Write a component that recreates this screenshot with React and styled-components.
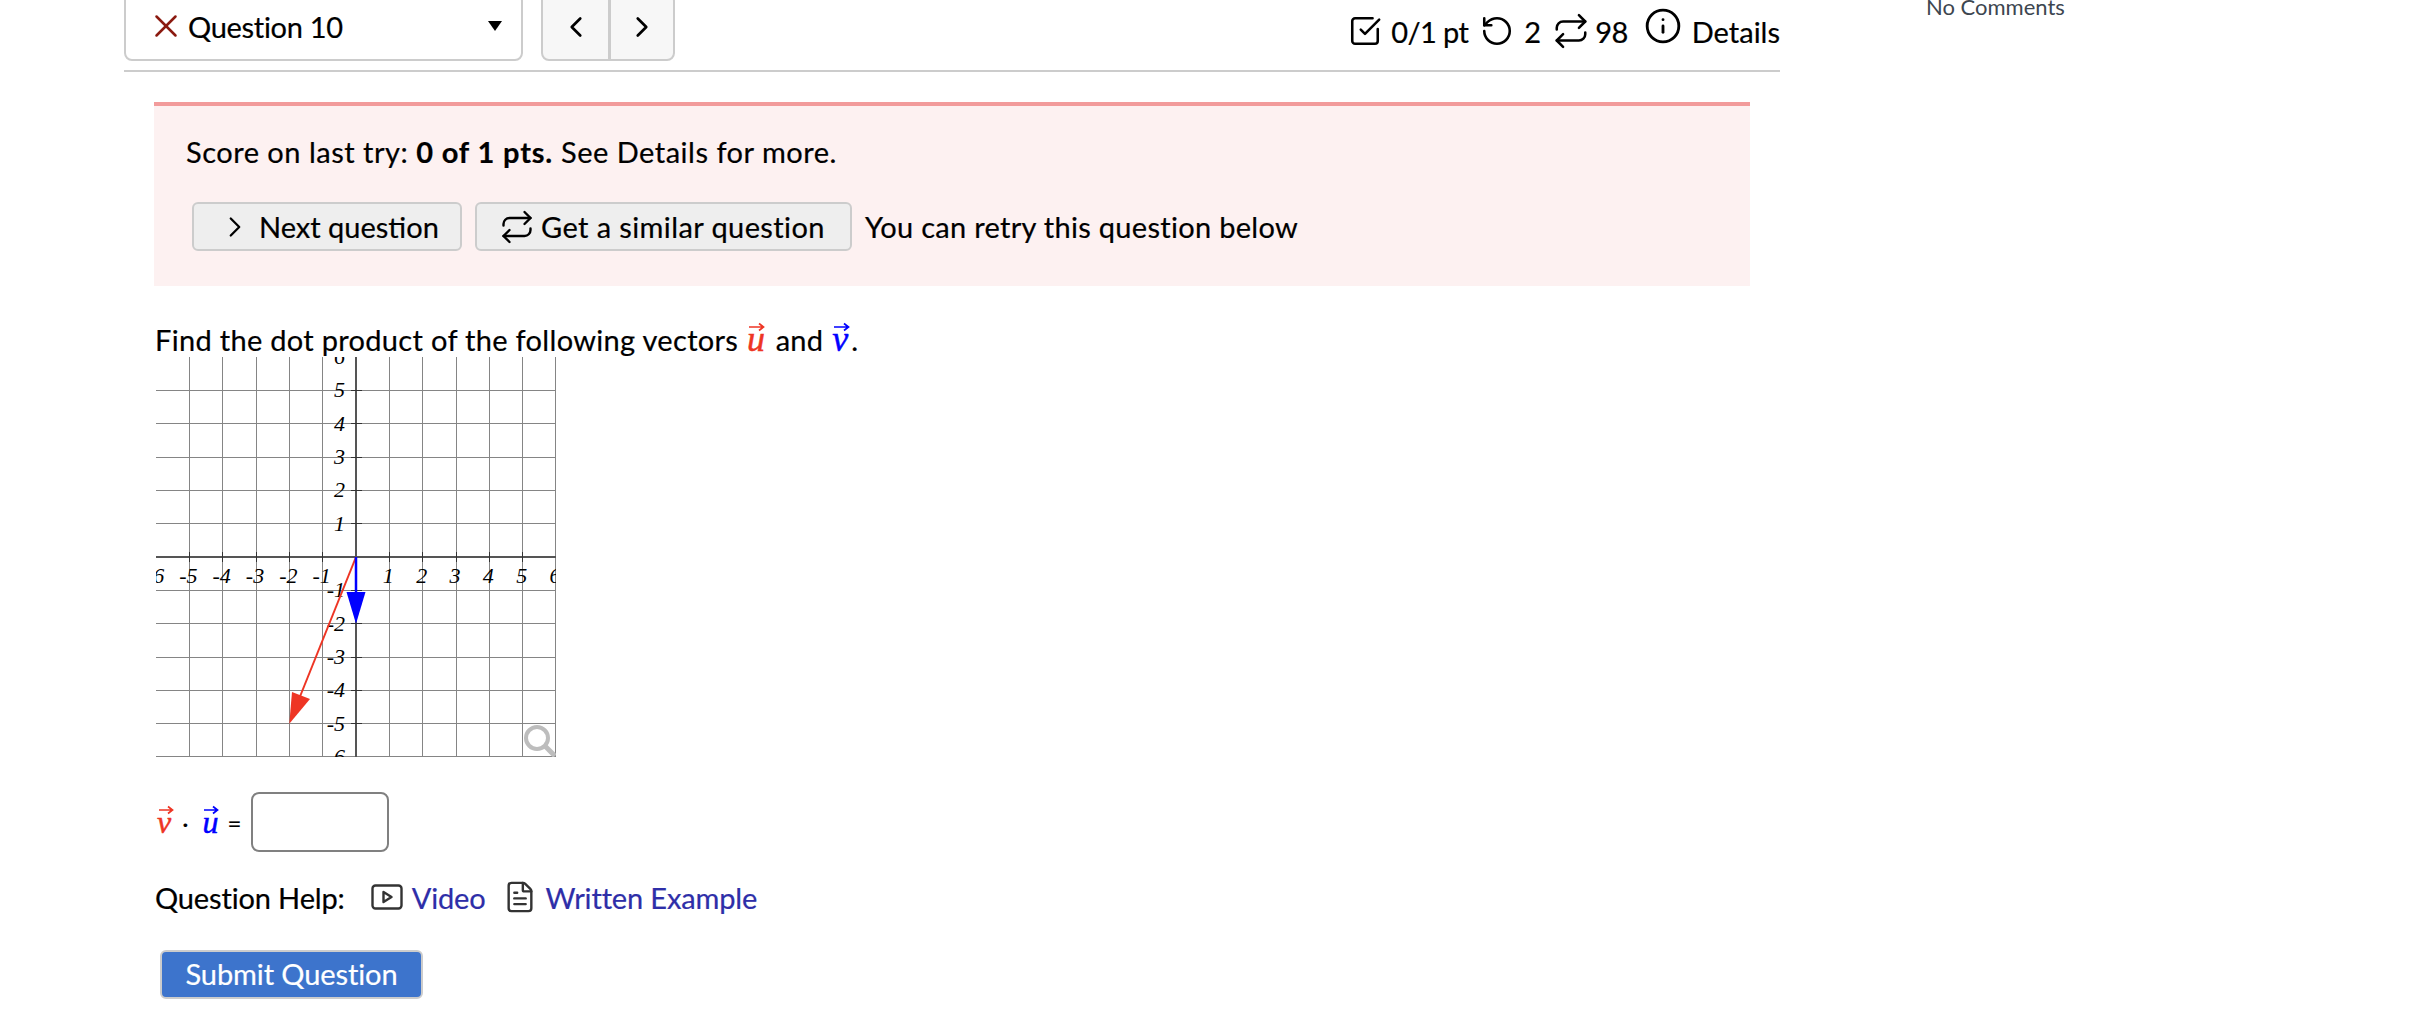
import React from "react";
import styled, { createGlobalStyle } from "styled-components";
import { X, ChevronLeft, ChevronRight, SquareCheckBig, RotateCcw, Repeat, Info, FileText } from "lucide-react";

const GlobalStyle = createGlobalStyle`
  html, body { margin: 0; padding: 0; background: #fff; overflow: hidden; height: 1027px; }
  body {
    font-family: Lato, "Liberation Sans", sans-serif;
    font-size: 29px;
    color: #000;
    -webkit-text-stroke: 0.2px currentColor;
  }
`;

const Page = styled.div`
  display: flex;
  align-items: flex-start;
  padding-left: 124px;
`;

const Main = styled.main`
  width: 1656px;
  margin-top: -7px;
`;

const Side = styled.aside`
  margin: -8px 0 0 146px;
  font-size: 22px;
  line-height: 30px;
  color: #3d4650;
  -webkit-text-stroke: 0;
`;

const Header = styled.header`
  display: flex;
  height: 79px;
  box-sizing: border-box;
  border-bottom: 2px solid #ccc;
`;

const Select = styled.div`
  width: 399px;
  height: 68px;
  box-sizing: border-box;
  display: flex;
  align-items: center;
  padding: 0 19px 2px 27px;
  gap: 9px;
  border: 2px solid #ccc;
  border-radius: 8px;
  letter-spacing: -0.3px;
  svg { margin: 0 -6px; }
`;

const Caret = styled.span`
  margin-left: auto;
  width: 0;
  height: 0;
  border-left: 7px solid transparent;
  border-right: 7px solid transparent;
  border-top: 10px solid #000;
`;

const NavGroup = styled.div`
  display: flex;
  height: 68px;
  margin-left: 18px;
  box-sizing: border-box;
  border: 2px solid #ccc;
  border-radius: 8px;
  background: #f7f7f7;
`;

const NavButton = styled.div`
  width: 65px;
  box-sizing: border-box;
  display: flex;
  align-items: center;
  justify-content: center;
  & + & { border-left: 3px solid #ccc; }
`;

const Stats = styled.div`
  margin-left: auto;
  height: 68px;
  display: flex;
  align-items: center;
  padding-top: 8px;
  box-sizing: border-box;
`;

const Stat = styled.span`
  display: inline-flex;
  align-items: center;
  gap: ${(p) => p.$gap}px;
  margin-left: ${(p) => p.$left || 0}px;
  letter-spacing: ${(p) => p.$track || 0}px;
  white-space: nowrap;
`;

const RaisedInfo = styled(Info)`
  margin-top: -11px;
`;

const Alert = styled.section`
  width: 1596px;
  height: 184px;
  box-sizing: border-box;
  margin: 30px 0 0 30px;
  padding: 27px 32px 0;
  background: #fdf1f1;
  border-top: 4px solid #f29b9b;
`;

const AlertLine = styled.div`
  line-height: 38px;
  letter-spacing: 0.5px;
  b { letter-spacing: 0.85px; }
`;

const Actions = styled.div`
  display: flex;
  align-items: center;
  margin: 31px 0 0 6px;
  gap: 13px;
`;

const Button = styled.div`
  display: flex;
  align-items: center;
  width: ${(p) => p.$w}px;
  height: 49px;
  box-sizing: border-box;
  padding-left: ${(p) => p.$pad}px;
  gap: ${(p) => p.$gap}px;
  background: #eee;
  border: 2px solid #ccc;
  border-radius: 6px;
  letter-spacing: ${(p) => p.$track || 0}px;
`;

const Note = styled.span`
  letter-spacing: 0.3px;
`;

const Question = styled.section`
  margin: 34px 0 0 31px;
`;

const Prompt = styled.p`
  position: relative;
  z-index: 1;
  margin: 0;
  line-height: 40px;
  white-space: nowrap;
  letter-spacing: 0.31px;
`;

const MathVar = styled.span`
  position: relative;
  display: inline-block;
  margin: 0 ${(p) => p.$after || 0}px 0 ${(p) => p.$before || 0}px;
  font-family: "Liberation Serif", serif;
  font-style: italic;
  font-size: ${(p) => p.$size}px;
  line-height: 1;
  color: ${(p) => p.$color};
  letter-spacing: 0;
  -webkit-text-stroke: 0.5px currentColor;
  svg {
    position: absolute;
    left: 2px;
    top: ${(p) => p.$top}px;
  }
`;

const GraphBox = styled.div`
  width: 400px;
  height: 400px;
  margin: -3px 0 0 1px;
  overflow: hidden;
  -webkit-text-stroke: 0;
`;

const AnswerRow = styled.div`
  display: flex;
  align-items: center;
  height: 60px;
  margin: 35px 0 0 2px;
  font-size: 24px;
`;

const Dot = styled.span`
  margin: 0 14px 0 11px;
`;

const Equals = styled.span`
  margin: 0 10px 0 9px;
`;

const AnswerInput = styled.div`
  width: 138px;
  height: 60px;
  box-sizing: border-box;
  border: 2px solid #808080;
  border-radius: 8px;
  background: #fff;
`;

const HelpRow = styled.div`
  display: flex;
  align-items: center;
  height: 40px;
  margin-top: 25px;
  white-space: nowrap;
  letter-spacing: -0.15px;
`;

const HelpLink = styled.a`
  display: inline-flex;
  align-items: center;
  gap: ${(p) => p.$gap}px;
  margin-left: ${(p) => p.$left}px;
  color: #2e2ea8;
`;

const Submit = styled.div`
  display: flex;
  align-items: center;
  justify-content: center;
  width: 263px;
  height: 49px;
  box-sizing: border-box;
  margin: 33px 0 0 5px;
  padding-bottom: 2px;
  color: #fff;
  background: #3d74cc;
  border: 2px solid #ccc;
  border-radius: 6px;
  letter-spacing: -0.1px;
`;

const VecArrow = ({ color, w }) => (
  <svg width={w} height="10" viewBox={`0 0 ${w} 10`}>
    <path d={`M0 5h${w - 2}M${w - 6} 1.500l4.500 3.500-4.500 3.500`} fill="none" stroke={color} strokeWidth="1.7" />
  </svg>
);

const VideoIcon = () => (
  <svg width="32" height="26" viewBox="0 0 32 26" fill="none" stroke="#333" strokeWidth="2.4">
    <rect x="1.5" y="1.500" width="29" height="23" rx="3" />
    <path d="M12.5 8l8 5-8 5z" strokeLinejoin="round" />
  </svg>
);

const U = 400 / 12;
const units = [-6, -5, -4, -3, -2, -1, 1, 2, 3, 4, 5, 6];
const gridLines = [1, 2, 3, 4, 5, 6, 7, 8, 9, 10, 11, 12].map((i) => Math.min(i * U, 399.5));

const Graph = () => (
  <svg width="400" height="400" viewBox="0 0 400 400">
    <g shapeRendering="crispEdges">
      {gridLines.map((pos) => (
        <g key={pos} stroke="#858585" strokeWidth="1">
          <line x1={pos} y1="0" x2={pos} y2="400" />
          <line x1="0" y1={pos} x2="400" y2={pos} />
        </g>
      ))}
      <line x1="200" y1="0" x2="200" y2="400" stroke="#555" strokeWidth="2" />
      <line x1="0" y1="200" x2="400" y2="200" stroke="#555" strokeWidth="2" />
      {units.filter((n) => Math.abs(n) < 6).map((n) => (
        <g key={n} stroke="#333">
          <line x1={200 + n * U} y1="195" x2={200 + n * U} y2="205" />
          <line x1="195" y1={200 - n * U} x2="206" y2={200 - n * U} />
        </g>
      ))}
    </g>
    {units.map((n) => (
      <g key={n} fontFamily="Liberation Serif" fontStyle="italic" fontSize="22" fill="#000">
        <text x={200 + n * U - 1} y="226" textAnchor="middle">{n}</text>
        <text x="189" y={200 - n * U + 7} textAnchor="end">{n}</text>
      </g>
    ))}
    <line x1="200" y1="200" x2="141" y2="347" stroke="#ee3524" strokeWidth="2" />
    <path d="M133.3 366.7 L136 335 L154 342 Z" fill="#ee3524" />
    <line x1="200" y1="200" x2="200" y2="240" stroke="#0000ff" strokeWidth="2.500" />
    <path d="M200 266.7 L190.500 235 L209.500 235 Z" fill="#0000ff" />
    <g fill="none" stroke="#bdbdbd" strokeWidth="4">
      <circle cx="381" cy="381" r="11" />
      <line x1="389" y1="389" x2="399" y2="399" strokeWidth="5" />
    </g>
  </svg>
);

export default function App() {
  return (
    <>
      <GlobalStyle />
      <Page>
        <Main>
          <Header>
            <Select>
              <X size={38} color="#8b1a10" strokeWidth={1.6} />
              <span>Question 10</span>
              <Caret />
            </Select>
            <NavGroup>
              <NavButton><ChevronLeft size={34} strokeWidth={1.9} /></NavButton>
              <NavButton><ChevronRight size={34} strokeWidth={1.9} /></NavButton>
            </NavGroup>
            <Stats>
              <Stat $gap={9} $track={-0.6}><SquareCheckBig size={34} strokeWidth={1.8} /> 0/1 pt</Stat>
              <Stat $left={12} $gap={10}><RotateCcw size={34} strokeWidth={1.8} /> 2</Stat>
              <Stat $left={11} $gap={5} $track={-0.5}><Repeat size={38} strokeWidth={1.6} /> 98</Stat>
              <Stat $left={16} $gap={10}><RaisedInfo size={38} strokeWidth={1.8} /> Details</Stat>
            </Stats>
          </Header>

          <Alert>
            <AlertLine>Score on last try: <b>0 of 1 pts.</b> See Details for more.</AlertLine>
            <Actions>
              <Button $w={270} $pad={24} $gap={7}>
                <ChevronRight size={34} strokeWidth={1.6} /> Next question
              </Button>
              <Button $w={377} $pad={22} $gap={6} $track={0.4}>
                <Repeat size={36} strokeWidth={1.6} /> Get a similar question
              </Button>
              <Note>You can retry this question below</Note>
            </Actions>
          </Alert>

          <Question>
            <Prompt>
              Find the dot product of the following vectors{" "}
              <MathVar $color="#ee3524" $size={36} $top={1} $before={1} $after={3}><VecArrow color="#ee3524" w={16} />u</MathVar> and{" "}
              <MathVar $color="#0000ff" $size={36} $top={1} $before={1} $after={3}><VecArrow color="#0000ff" w={16} />v</MathVar>.
            </Prompt>
            <GraphBox><Graph /></GraphBox>
            <AnswerRow>
              <MathVar $color="#ee3524" $size={32} $top={-1}><VecArrow color="#ee3524" w={15} />v</MathVar>
              <Dot>·</Dot>
              <MathVar $color="#0000ff" $size={32} $top={-1}><VecArrow color="#0000ff" w={15} />u</MathVar>
              <Equals>=</Equals>
              <AnswerInput />
            </AnswerRow>
            <HelpRow>
              Question Help:
              <HelpLink $left={26} $gap={9}><VideoIcon /> Video</HelpLink>
              <HelpLink $left={17} $gap={9}><FileText size={34} color="#333" strokeWidth={1.7} /> Written Example</HelpLink>
            </HelpRow>
            <Submit>Submit Question</Submit>
          </Question>
        </Main>
        <Side>No Comments</Side>
      </Page>
    </>
  );
}
